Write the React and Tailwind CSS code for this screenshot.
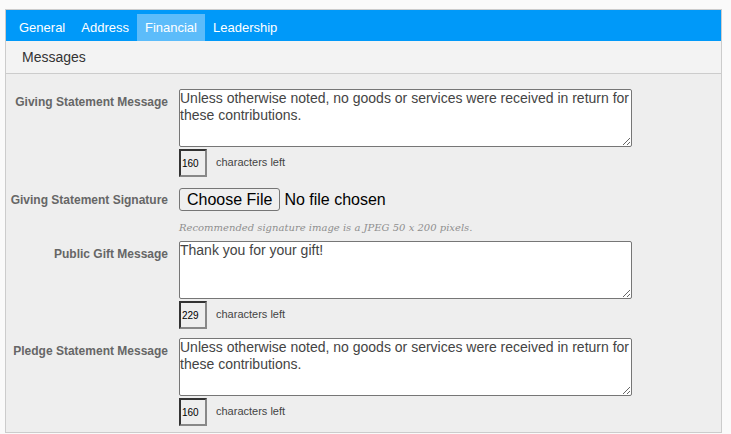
import { useState } from 'react'

const GIVING_TEXT = 'Unless otherwise noted, no goods or services were received in return for these contributions.'

function CharCounter({ left }) {
  return (
    <div className="flex items-center gap-[9px] mt-[2px]">
      <div
        className="w-[28px] h-[28px] flex items-center pl-[1px] text-[10px] text-black"
        style={{ borderStyle: 'solid', borderWidth: '2px', borderColor: '#333 #888 #888 #333' }}
      >
        {left}
      </div>
      <span className="text-[11px] text-[#444] -mt-[1px]">characters left</span>
    </div>
  )
}

function MessageRow({ label, value, max, className = '' }) {
  const [text, setText] = useState(value)
  return (
    <div className={`flex gap-[11px] ${className}`}>
      <label className="w-[162px] shrink-0 text-right text-[12px] font-bold text-[#666] pt-[4px]">{label}</label>
      <div>
        <textarea
          value={text}
          onChange={(e) => setText(e.target.value)}
          className="block w-[453px] h-[58px] bg-white border border-[#767676] rounded-[2px] px-0 py-0 text-[14px] leading-[17px] text-[#444] outline-none"
          style={{ resize: 'both' }}
        />
        <CharCounter left={max - text.length} />
      </div>
    </div>
  )
}

export default function App() {
  const tabs = ['General', 'Address', 'Financial', 'Leadership']

  return (
    <div className="min-h-[434px] bg-[#fafafa] pt-[9px] px-[5px]" style={{ fontFamily: '"Liberation Sans", Arial, sans-serif' }}>
      <div className="w-[717px] border border-[#ccc]">
        {/* Tabs */}
        <div className="h-[31px] bg-[#0099f9] pl-[5px] pt-[4px] flex">
          {tabs.map((tab) => (
            <div
              key={tab}
              className={`h-[27px] px-[8px] flex items-center text-[13px] text-white ${tab === 'Financial' ? 'bg-[#5cbcfa]' : ''}`}
            >
              {tab}
            </div>
          ))}
        </div>

        {/* Section header */}
        <div className="h-[33px] bg-[#f3f3f3] border-b border-[#ccc] pl-[16px] pt-[1px] flex items-center text-[14px] text-[#333]">
          Messages
        </div>

        {/* Form body */}
        <div className="bg-[#eeeeee] pt-[15px] pb-[6px]">
          <MessageRow label="Giving Statement Message" value={GIVING_TEXT} max={253} />

          <div className="flex gap-[11px] mt-[11px]">
            <label className="w-[162px] shrink-0 text-right text-[12px] font-bold text-[#666] pt-[3px]">Giving Statement Signature</label>
            <div>
              <div className="flex items-center h-[23px]">
                <button className="h-[23px] px-[7px] border border-[#767676] rounded-[3px] bg-[#efefef] text-[16px] text-black leading-none">
                  Choose File
                </button>
                <span className="ml-[4px] text-[16px] text-black">No file chosen</span>
              </div>
              <p className="mt-[9px] text-[10px] italic text-[#8f8f8f]" style={{ fontFamily: '"DejaVu Serif", Georgia, serif' }}>
                Recommended signature image is a JPEG 50 x 200 pixels.
              </p>
            </div>
          </div>

          <MessageRow label="Public Gift Message" value="Thank you for your gift!" max={253} className="mt-[6px]" />
          <MessageRow label="Pledge Statement Message" value={GIVING_TEXT} max={253} className="mt-[9px]" />
        </div>
      </div>
    </div>
  )
}
